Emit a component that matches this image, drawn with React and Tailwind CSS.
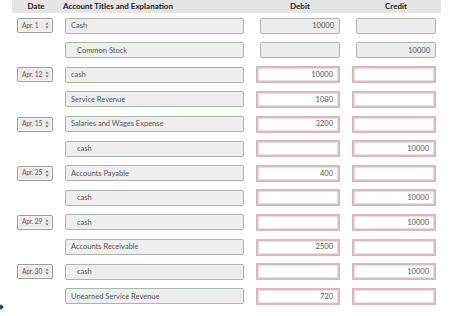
import React from "react";

const rows = [
  { date: "Apr. 1", title: "Cash", debit: "10000", credit: "", locked: true },
  { date: "", title: "Common Stock", indent: true, debit: "", credit: "10000", locked: true },
  { date: "Apr. 12", title: "cash", debit: "10000", credit: "" },
  { date: "", title: "Service Revenue", debit: "1080", credit: "" },
  { date: "Apr. 15", title: "Salaries and Wages Expense", debit: "3200", credit: "" },
  { date: "", title: "cash", indent: true, debit: "", credit: "10000" },
  { date: "Apr. 25", title: "Accounts Payable", debit: "400", credit: "" },
  { date: "", title: "cash", indent: true, debit: "", credit: "10000" },
  { date: "Apr. 29", title: "cash", indent: true, debit: "", credit: "10000" },
  { date: "", title: "Accounts Receivable", debit: "2500", credit: "" },
  { date: "Apr. 30", title: "cash", indent: true, debit: "", credit: "10000" },
  { date: "", title: "Unearned Service Revenue", debit: "720", credit: "" },
];

function UpDown() {
  return (
    <svg width="4" height="7" viewBox="0 0 4 7" className="shrink-0">
      <path d="M2 0.5 L3.6 2.6 L0.4 2.6 Z" fill="#666" />
      <path d="M2 6.5 L3.6 4.4 L0.4 4.4 Z" fill="#666" />
    </svg>
  );
}

function DateSelect({ value }) {
  return (
    <div className="ml-[5px] flex h-[15px] w-[36px] items-center justify-between whitespace-nowrap rounded-[2px] border border-[#9c9c9c] bg-[#ebebeb] pl-[4px] pr-[3px] text-[6.6px] tracking-[-0.15px] text-[#5a5a5a] shadow-[inset_0_0_0_1px_#f6f6f6]">
      <span className="whitespace-nowrap">{value}</span>
      <UpDown />
    </div>
  );
}

function AmountBox({ value, locked }) {
  if (locked) {
    return (
      <div className="flex h-[16px] w-[80px] items-center justify-end rounded-[2px] border border-[#a9b8a9] bg-[#ececec] pr-[5px] text-[7.5px] text-[#555]">
        {value}
      </div>
    );
  }
  return (
    <div className="flex h-[17px] w-[84px] items-center justify-end border-2 border-[#dbb8ba] bg-white pr-[5px] text-[7.5px] text-[#555] shadow-[inset_0_0_0_1px_#f0dfe0]">
      {value}
    </div>
  );
}

export default function App() {
  return (
    <div
      className="relative h-[316px] w-[474px] overflow-hidden bg-white"
      style={{ fontFamily: "Lato, 'Open Sans', sans-serif" }}
    >
      <div className="ml-[12px] w-[429px]">
        {/* column headings */}
        <div className="flex h-[13.4px] items-start bg-[#e5e5e5] pt-[0.5px] text-[8px] font-bold leading-[10px] text-[#222]">
          <div className="w-[48px] text-center">Date</div>
          <div className="w-[184px] pl-[3px]">Account Titles and Explanation</div>
          <div className="w-[96px] pl-[16px] text-center">Debit</div>
          <div className="w-[96px] pl-[16px] text-center">Credit</div>
        </div>

        {/* journal lines */}
        {rows.map((r, i) => (
          <div key={i} className="flex h-[24.6px] items-center">
            <div className="w-[53px]">{r.date && <DateSelect value={r.date} />}</div>
            <div
              className={`flex h-[16px] w-[179px] items-center rounded-[2px] border border-[#a3bba3] bg-[#eeeeee] text-[7.5px] text-[#555] ${
                r.indent ? "pl-[11px]" : "pl-[5px]"
              }`}
            >
              {r.title}
            </div>
            <div className="flex w-[96px] justify-end">
              <AmountBox value={r.debit} locked={r.locked} />
            </div>
            <div className="flex w-[96px] justify-end">
              <AmountBox value={r.credit} locked={r.locked} />
            </div>
          </div>
        ))}
      </div>

      {/* small page marker at the left edge */}
      <div className="absolute left-[-1px] top-[305px] h-[4px] w-[4px] rotate-45 bg-[#2b3b86]" />
    </div>
  );
}
